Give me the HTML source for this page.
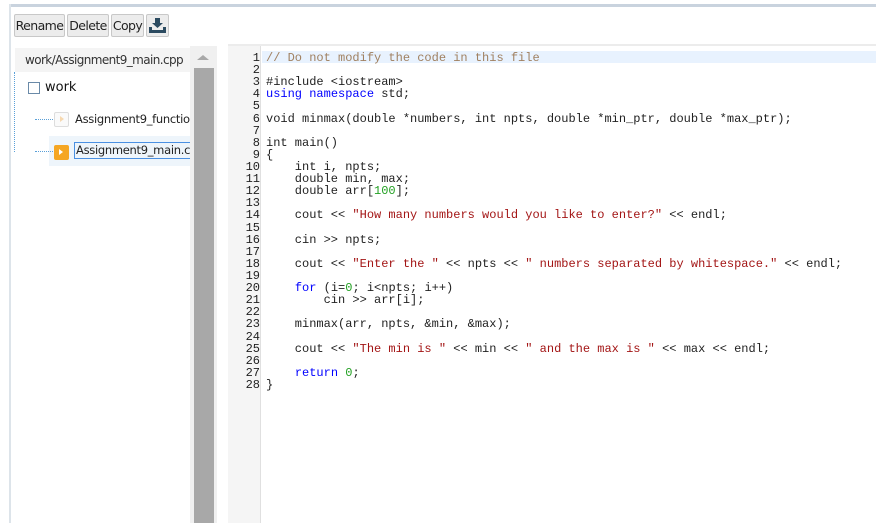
<!DOCTYPE html>
<html><head><meta charset="utf-8">
<style>
*{margin:0;padding:0;box-sizing:border-box}
body{width:876px;height:523px;background:#fff;position:relative;overflow:hidden;font-family:"Liberation Sans",sans-serif}
.abs{position:absolute}
.btn{position:absolute;top:14px;height:23px;border:1px solid #c8c8c8;background:#ececec;border-radius:2px;font-size:12.5px;color:#222;line-height:21px;text-align:center;font-family:"DejaVu Sans","Liberation Sans",sans-serif;letter-spacing:-0.6px;white-space:nowrap;overflow:hidden}
pre{font-family:"Liberation Mono",monospace;font-size:12px;line-height:12.11px;color:#222}
.k{color:#00f}.s{color:#a31515}.n{color:#22a022}.c{color:#a08060}
</style></head><body>
<div class="abs" style="left:9px;top:4px;width:867px;height:3px;background:#c9d3de"></div>
<div class="abs" style="left:9px;top:4px;width:2px;height:519px;background:#dde4ea"></div>
<div class="btn" style="left:14px;width:51px">Rename</div>
<div class="btn" style="left:67px;width:42px">Delete</div>
<div class="btn" style="left:111px;width:33px">Copy</div>
<div class="btn" style="left:146px;width:23px">
<svg width="17" height="15" viewBox="0 0 17 15" style="margin-top:3px"><path d="M6 0h5v5h3l-5.5 5L3 5h3z" fill="#2b4a60"/><path d="M0 9h3v3h11V9h3v6H0z" fill="#2b4a60"/></svg></div>
<div class="abs" style="left:228px;top:44px;width:648px;height:2px;background:#ececec"></div>
<div class="abs" style="left:15px;top:48px;width:175px;height:24px;background:#f4f4f4;font-size:12px;color:#333;line-height:24px;padding-left:10px;font-family:'DejaVu Sans',sans-serif;letter-spacing:-0.6px;white-space:nowrap;overflow:hidden">work/Assignment9_main.cpp</div>
<div class="abs" style="left:14px;top:72px;height:80px;border-left:1px dotted #5aa0d8"></div>
<div class="abs" style="left:28px;top:82px;width:12px;height:12px;border:1px solid #6a8aa8"></div>
<div class="abs" style="left:45px;top:80px;font-size:13px;color:#111;font-family:'DejaVu Sans',sans-serif">work</div>
<div class="abs" style="left:35px;top:119px;width:18px;border-top:1px dotted #5aa0d8"></div>
<div class="abs" style="left:54px;top:112px;width:15px;height:15px;border:1px solid #ddd;border-radius:2px;background:#fafafa"><div style="margin:3px 0 0 5px;width:0;height:0;border-left:4px solid #f6d8b0;border-top:3.5px solid transparent;border-bottom:3.5px solid transparent"></div></div>
<div class="abs" style="left:75px;top:112px;font-size:11.5px;color:#222;font-family:'DejaVu Sans',sans-serif;width:115px;overflow:hidden;white-space:nowrap;letter-spacing:-0.3px">Assignment9_functions.cpp</div>
<div class="abs" style="left:49px;top:136px;width:141px;height:30px;background:#eef5fb"></div>
<div class="abs" style="left:35px;top:151px;width:18px;border-top:1px dotted #5aa0d8"></div>
<div class="abs" style="left:54px;top:145px;width:15px;height:15px;background:#f5a623;border-radius:2px"><div style="margin:4px 0 0 5px;width:0;height:0;border-left:4px solid #fff;border-top:3.5px solid transparent;border-bottom:3.5px solid transparent"></div></div>
<div class="abs" style="left:74px;top:142px;width:117px;height:17px;border:1px solid #4a90e2;font-size:11.5px;color:#222;font-family:'DejaVu Sans',sans-serif;overflow:hidden;white-space:nowrap;padding-left:1px;line-height:15px;letter-spacing:-0.3px">Assignment9_main.cpp</div>
<div class="abs" style="left:190px;top:46px;width:27px;height:477px;background:#f0f0f0"></div>
<div class="abs" style="left:197px;top:55px;width:0;height:0;border-bottom:5px solid #a8a8a8;border-left:6px solid transparent;border-right:6px solid transparent"></div>
<div class="abs" style="left:194px;top:68px;width:20px;height:455px;background:#a8a8a8"></div>
<div class="abs" style="left:228px;top:46px;width:33px;height:477px;background:#f5f5f5;border-right:1px solid #e0e0e0"></div>
<div class="abs" style="left:262px;top:51px;width:614px;height:12px;background:#e8f2fe"></div>
<pre class="abs" style="left:228px;top:52px;width:32px;text-align:right">1
2
3
4
5
6
7
8
9
10
11
12
13
14
15
16
17
18
19
20
21
22
23
24
25
26
27
28</pre>
<pre class="abs" style="left:266px;top:52px"><span class="c">// Do not modify the code in this file</span>

#include &lt;iostream&gt;
<span class="k">using</span> <span class="k">namespace</span> std;

void minmax(double *numbers, int npts, double *min_ptr, double *max_ptr);

int main()
{
    int i, npts;
    double min, max;
    double arr[<span class="n">100</span>];

    cout &lt;&lt; <span class="s">"How many numbers would you like to enter?"</span> &lt;&lt; endl;

    cin &gt;&gt; npts;

    cout &lt;&lt; <span class="s">"Enter the "</span> &lt;&lt; npts &lt;&lt; <span class="s">" numbers separated by whitespace."</span> &lt;&lt; endl;

    <span class="k">for</span> (i=<span class="n">0</span>; i&lt;npts; i++)
        cin &gt;&gt; arr[i];

    minmax(arr, npts, &amp;min, &amp;max);

    cout &lt;&lt; <span class="s">"The min is "</span> &lt;&lt; min &lt;&lt; <span class="s">" and the max is "</span> &lt;&lt; max &lt;&lt; endl;

    <span class="k">return</span> <span class="n">0</span>;
}</pre>
</body></html>
